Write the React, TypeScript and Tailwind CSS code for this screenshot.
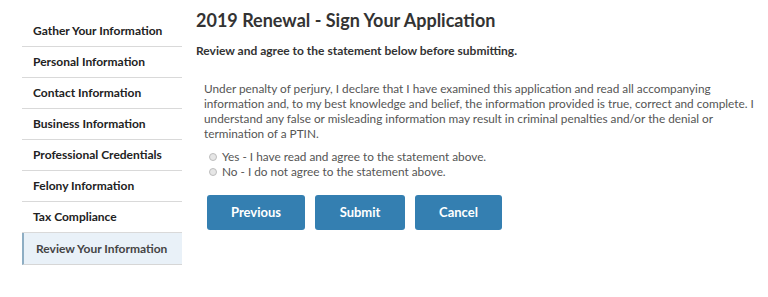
import React from "react";

const steps = [
  "Gather Your Information",
  "Personal Information",
  "Contact Information",
  "Business Information",
  "Professional Credentials",
  "Felony Information",
  "Tax Compliance",
  "Review Your Information",
];

function Radio({ label }: { label: string }) {
  return (
    <label className="flex items-center gap-[5px] h-[15px]">
      <span className="w-[8px] h-[8px] rounded-full border border-[#bdbdbd] bg-[#e6e6e6]" />
      {label}
    </label>
  );
}

export default function App() {
  return (
    <div
      className="flex w-[768px] h-[297px] bg-white text-[#333]"
      style={{ fontFamily: "Lato, 'Open Sans', sans-serif" }}
    >
      {/* sidebar */}
      <nav className="ml-[22px] mt-[16px] w-[160px] shrink-0">
        <ul>
          {steps.map((s, i) => {
            const active = i === steps.length - 1;
            return (
              <li
                key={s}
                className={
                  active
                    ? "h-[32px] flex items-center pl-[12px] bg-[#e9f1f8] border-l-2 border-[#8eaec4] border-b border-b-[#d6d6d6] text-[12px] font-bold text-[#444]"
                    : "h-[31px] flex items-center pl-[11px] border-b border-[#d9d9d9] text-[12px] font-bold text-[#222]"
                }
              >
                {s}
              </li>
            );
          })}
        </ul>
      </nav>

      {/* main */}
      <main className="ml-[14px] pt-[9px] flex-1">
        <h1 className="text-[18px] font-bold text-[#333] leading-[22px]">
          2019 Renewal - Sign Your Application
        </h1>
        <p className="mt-[12px] text-[12px] font-bold text-[#333] leading-[16px]">
          Review and agree to the statement below before submitting.
        </p>

        <div className="ml-[8px] mt-[22px] text-[11.8px] leading-[15px] text-[#555] whitespace-nowrap">
          <p>
            Under penalty of perjury, I declare that I have examined this application and read all accompanying
            <br />
            information and, to my best knowledge and belief, the information provided is true, correct and complete. I
            <br />
            understand any false or misleading information may result in criminal penalties and/or the denial or
            <br />
            termination of a PTIN.
          </p>
          <div className="mt-[8px] ml-[5px] flex flex-col">
            <Radio label="Yes - I have read and agree to the statement above." />
            <Radio label="No - I do not agree to the statement above." />
          </div>
        </div>

        <div className="ml-[11px] mt-[16px] flex gap-[10px]">
          <button className="w-[98px] h-[35px] rounded-[3px] bg-[#347fb1] text-white text-[13px] font-bold">
            Previous
          </button>
          <button className="w-[90px] h-[35px] rounded-[3px] bg-[#347fb1] text-white text-[13px] font-bold">
            Submit
          </button>
          <button className="w-[87px] h-[35px] rounded-[3px] bg-[#347fb1] text-white text-[13px] font-bold">
            Cancel
          </button>
        </div>
      </main>
    </div>
  );
}
